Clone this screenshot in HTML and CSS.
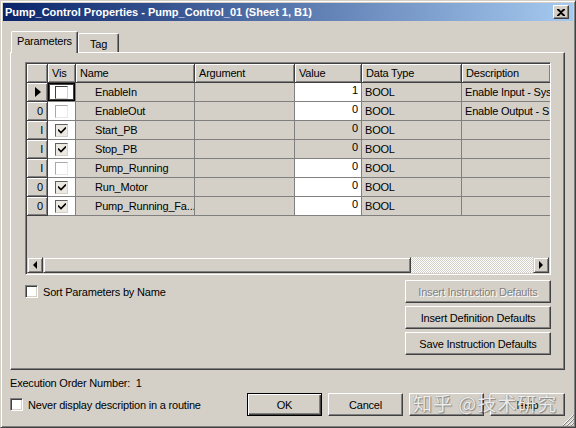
FILE: index.html
```html
<!DOCTYPE html>
<html lang="en">
<head>
  <meta charset="UTF-8">
  <title>Pump_Control Properties</title>
  <link rel="stylesheet" href="styles.css">
</head>
<body>
  <div class="window">
    <div class="titlebar">
      <span class="title">Pump_Control Properties - Pump_Control_01 (Sheet 1, B1)</span>
      <button class="close">
        <svg width="8" height="7" viewBox="0 0 8 7"><path d="M0 0h2l2 2 2-2h2v1L5 3.5 8 6v1H6L4 5 2 7H0V6l3-2.5L0 1z" fill="#000"/></svg>
      </button>
    </div>

    <div class="content">
      <div class="tabs">
        <div class="tab active">Parameters</div>
        <div class="tab tag">Tag</div>
      </div>

      <div class="panel">
        <div class="grid">
          <div class="grid-row head">
            <div class="cell c-hdr raised"></div>
            <div class="cell c-vis raised">Vis</div>
            <div class="cell c-name raised">Name</div>
            <div class="cell c-arg raised">Argument</div>
            <div class="cell c-val raised">Value</div>
            <div class="cell c-type raised">Data Type</div>
            <div class="cell c-desc raised">Description</div>
          </div>

          <div class="grid-row">
            <div class="cell c-hdr raised"><span class="row-arrow"></span></div>
            <div class="cell c-vis white focus"><span class="vbox"></span></div>
            <div class="cell c-name">EnableIn</div>
            <div class="cell c-arg"></div>
            <div class="cell c-val white">1</div>
            <div class="cell c-type">BOOL</div>
            <div class="cell c-desc">Enable Input - Sys</div>
          </div>
          <div class="grid-row">
            <div class="cell c-hdr raised">0</div>
            <div class="cell c-vis white"><span class="vbox dim"></span></div>
            <div class="cell c-name">EnableOut</div>
            <div class="cell c-arg"></div>
            <div class="cell c-val white">0</div>
            <div class="cell c-type">BOOL</div>
            <div class="cell c-desc">Enable Output - S</div>
          </div>
          <div class="grid-row">
            <div class="cell c-hdr raised">I</div>
            <div class="cell c-vis white"><span class="vbox checked"><svg width="8" height="7" viewBox="0 0 8 7"><path d="M0 2.5l3 3 5-5" stroke="#000" stroke-width="1.6" fill="none"/></svg></span></div>
            <div class="cell c-name">Start_PB</div>
            <div class="cell c-arg"></div>
            <div class="cell c-val">0</div>
            <div class="cell c-type">BOOL</div>
            <div class="cell c-desc"></div>
          </div>
          <div class="grid-row">
            <div class="cell c-hdr raised">I</div>
            <div class="cell c-vis white"><span class="vbox checked"><svg width="8" height="7" viewBox="0 0 8 7"><path d="M0 2.5l3 3 5-5" stroke="#000" stroke-width="1.6" fill="none"/></svg></span></div>
            <div class="cell c-name">Stop_PB</div>
            <div class="cell c-arg"></div>
            <div class="cell c-val">0</div>
            <div class="cell c-type">BOOL</div>
            <div class="cell c-desc"></div>
          </div>
          <div class="grid-row">
            <div class="cell c-hdr raised">I</div>
            <div class="cell c-vis white"><span class="vbox dim"></span></div>
            <div class="cell c-name">Pump_Running</div>
            <div class="cell c-arg"></div>
            <div class="cell c-val white">0</div>
            <div class="cell c-type">BOOL</div>
            <div class="cell c-desc"></div>
          </div>
          <div class="grid-row">
            <div class="cell c-hdr raised">0</div>
            <div class="cell c-vis white"><span class="vbox checked"><svg width="8" height="7" viewBox="0 0 8 7"><path d="M0 2.5l3 3 5-5" stroke="#000" stroke-width="1.6" fill="none"/></svg></span></div>
            <div class="cell c-name">Run_Motor</div>
            <div class="cell c-arg"></div>
            <div class="cell c-val white">0</div>
            <div class="cell c-type">BOOL</div>
            <div class="cell c-desc"></div>
          </div>
          <div class="grid-row">
            <div class="cell c-hdr raised">0</div>
            <div class="cell c-vis white"><span class="vbox checked"><svg width="8" height="7" viewBox="0 0 8 7"><path d="M0 2.5l3 3 5-5" stroke="#000" stroke-width="1.6" fill="none"/></svg></span></div>
            <div class="cell c-name">Pump_Running_Fa...</div>
            <div class="cell c-arg"></div>
            <div class="cell c-val white">0</div>
            <div class="cell c-type">BOOL</div>
            <div class="cell c-desc"></div>
          </div>

          <div class="grid-empty"></div>

          <div class="hscroll">
            <div class="sb-btn"><span class="arrow-left"></span></div>
            <div class="sb-thumb"></div>
            <div class="sb-track"></div>
            <div class="sb-btn"><span class="arrow-right"></span></div>
          </div>
        </div>

        <div class="lower">
          <div class="check-line sort">
            <span class="checkbox"></span>
            <span>Sort Parameters by Name</span>
          </div>
          <div class="side-buttons">
            <button class="btn disabled">Insert Instruction Defaults</button>
            <button class="btn">Insert Definition Defaults</button>
            <button class="btn">Save Instruction Defaults</button>
          </div>
        </div>
      </div>

      <div class="exec">Execution Order Number:&nbsp; 1</div>

      <div class="footer">
        <div class="check-line">
          <span class="checkbox"></span>
          <span>Never display description in a routine</span>
        </div>
        <div class="dialog-buttons">
          <button class="btn default">OK</button>
          <button class="btn">Cancel</button>
          <button class="btn disabled"></button>
          <button class="btn">Help</button>
        </div>
      </div>
    </div>

    <svg class="grip" width="12" height="12" viewBox="0 0 12 12">
      <path d="M11 1L1 11M11 5L5 11M11 9L9 11" stroke="#fff" stroke-width="1"/>
      <path d="M12 1L1 12M12 5L5 12M12 9L9 12" stroke="#808080" stroke-width="1"/>
    </svg>
    <div class="watermark">知乎 @技术研究</div>
  </div>
</body>
</html>
```

FILE: styles.css
```css
body {
  margin: 0;
  font-family: "Liberation Sans", Arial, sans-serif;
  font-size: 11px;
  letter-spacing: -0.2px;
  color: #000;
  background-color: #d4d0c8;
}

.window {
  position: relative;
  box-sizing: border-box;
  width: 576px;
  height: 428px;
  padding: 2px;
  background-color: #d4d0c8;
  border: 1px solid;
  border-color: #d4d0c8 #404040 #404040 #d4d0c8;
  box-shadow: inset 1px 1px #fff, inset -1px -1px #808080;
}

/* title bar */
.titlebar {
  display: flex;
  align-items: center;
  height: 18px;
  padding: 0 4px 0 2px;
  background: linear-gradient(to right, #0a246a, #a6caf0);
}

.title {
  flex-grow: 1;
  color: #fff;
  font-weight: bold;
  font-size: 11px;
  letter-spacing: 0;
  white-space: nowrap;
}

.close {
  display: flex;
  align-items: center;
  justify-content: center;
  width: 16px;
  height: 14px;
  padding: 0;
  background-color: #d4d0c8;
  border: 1px solid;
  border-color: #fff #404040 #404040 #fff;
  box-shadow: inset -1px -1px #808080;
}

.content {
  padding: 10px 8px 0 7px;
}

/* tabs */
.tabs {
  display: flex;
  align-items: flex-end;
  height: 21px;
  padding-left: 1px;
  position: relative;
  z-index: 2;
}

.tab {
  box-sizing: border-box;
  height: 19px;
  padding-top: 3px;
  text-align: center;
  background-color: #d4d0c8;
  border: 1px solid;
  border-color: #fff #404040 transparent #fff;
  border-bottom: none;
  border-radius: 2px 2px 0 0;
  box-shadow: inset -1px 0 #808080;
}

.tab.active {
  width: 67px;
  height: 22px;
  margin-bottom: -1px;
  padding-top: 3px;
}

.tab.tag {
  width: 41px;
  padding-top: 4px;
}

.panel {
  box-sizing: border-box;
  height: 318px;
  padding: 9px 12px 0 14px;
  border: 1px solid;
  border-color: #fff #404040 #404040 #fff;
  box-shadow: inset -1px -1px #808080;
}

/* parameter grid */
.grid {
  box-sizing: border-box;
  display: flex;
  flex-direction: column;
  width: 526px;
  height: 213px;
  padding: 1px;
  border: 1px solid;
  border-color: #808080 #fff #fff #808080;
  box-shadow: inset 1px 1px #404040, inset -1px -1px #d4d0c8;
  overflow: hidden;
}

.grid-row {
  display: flex;
  height: 19px;
  flex-shrink: 0;
}

.cell {
  box-sizing: border-box;
  height: 19px;
  line-height: 18px;
  padding: 0 3px;
  border-right: 1px solid #808080;
  border-bottom: 1px solid #808080;
  white-space: nowrap;
  overflow: hidden;
  flex-shrink: 0;
}

.raised {
  border-right-color: #404040;
  border-bottom-color: #404040;
  box-shadow: inset 1px 1px #fff, inset -1px -1px #808080;
}

.head .cell {
  padding-left: 4px;
}

.white {
  background-color: #fff;
}

.c-hdr {
  width: 21px;
  text-align: right;
  padding-right: 4px;
}
.c-vis {
  width: 28px;
  display: flex;
  align-items: center;
  justify-content: center;
}
.c-name {
  width: 119px;
  padding-left: 19px;
}
.c-arg {
  width: 100px;
}
.c-val {
  width: 67px;
  text-align: right;
  line-height: 15px;
}
.c-type {
  width: 100px;
}
.c-desc {
  width: 88px;
  border-right: none;
}

.head .c-vis {
  display: block;
}
.head .c-val {
  text-align: left;
  line-height: 18px;
}

.focus {
  box-shadow: inset 0 0 0 1px #000, inset 0 0 0 2px #404040;
}

.row-arrow {
  display: inline-block;
  width: 0;
  height: 0;
  border-top: 5px solid transparent;
  border-bottom: 5px solid transparent;
  border-left: 6px solid #000;
  vertical-align: -1px;
  margin-right: 2px;
}

.vbox {
  box-sizing: border-box;
  display: flex;
  align-items: center;
  justify-content: center;
  width: 13px;
  height: 13px;
  background-color: #fff;
  border: 1px solid;
  border-color: #404040 #d4d0c8 #d4d0c8 #404040;
}

.vbox.dim {
  border-color: #a8a8a8 #e8e8e8 #e8e8e8 #a8a8a8;
}

.vbox.checked {
  background-color: #ece9e2;
  border-color: #606060 #d4d0c8 #d4d0c8 #606060;
}

.grid-empty {
  flex-grow: 1;
}

/* horizontal scrollbar */
.hscroll {
  display: flex;
  height: 16px;
  flex-shrink: 0;
}

.sb-btn, .sb-thumb {
  box-sizing: border-box;
  height: 16px;
  background-color: #d4d0c8;
  border: 1px solid;
  border-color: #d4d0c8 #404040 #404040 #d4d0c8;
  box-shadow: inset 1px 1px #fff, inset -1px -1px #808080;
}

.sb-btn {
  width: 16px;
  display: flex;
  align-items: center;
  justify-content: center;
}

.sb-thumb {
  width: 368px;
}

.sb-track {
  width: 122px;
  background: repeating-conic-gradient(#fff 0 25%, #d4d0c8 0 50%) 0 0 / 2px 2px;
}

.arrow-left, .arrow-right {
  width: 0;
  height: 0;
  border-top: 4px solid transparent;
  border-bottom: 4px solid transparent;
}
.arrow-left {
  border-right: 4px solid #000;
}
.arrow-right {
  border-left: 4px solid #000;
}

/* below the grid */
.lower {
  display: flex;
  justify-content: space-between;
  width: 526px;
  margin-top: 5px;
}

.check-line {
  display: flex;
  align-items: center;
  gap: 5px;
}

.check-line.sort {
  align-self: flex-start;
  margin-top: 5px;
}

.checkbox {
  box-sizing: border-box;
  width: 13px;
  height: 13px;
  background-color: #fff;
  border: 1px solid;
  border-color: #808080 #fff #fff #808080;
  box-shadow: inset 1px 1px #404040, inset -1px -1px #d4d0c8;
}

.side-buttons {
  display: flex;
  flex-direction: column;
  gap: 3px;
  width: 146px;
}

.btn {
  box-sizing: border-box;
  height: 23px;
  padding: 0;
  font-family: "Liberation Sans", Arial, sans-serif;
  font-size: 11px;
  letter-spacing: -0.2px;
  color: #000;
  background-color: #d4d0c8;
  border: 1px solid;
  border-color: #fff #404040 #404040 #fff;
  box-shadow: inset -1px -1px #808080;
}

.btn.disabled {
  color: #808080;
  text-shadow: 1px 1px #fff;
}

.btn.default {
  border-color: #000;
  box-shadow: inset 1px 1px #fff, inset -1px -1px #404040, inset -2px -2px #808080;
}

.exec {
  margin-top: 7px;
  line-height: 13px;
}

.footer {
  display: flex;
  align-items: center;
  margin-top: 3px;
}

.dialog-buttons {
  display: flex;
  gap: 6px;
  margin-left: auto;
}

.dialog-buttons .btn {
  width: 75px;
}

.grip {
  position: absolute;
  right: 1px;
  bottom: 1px;
}

.watermark {
  position: absolute;
  left: 412px;
  top: 390px;
  font-family: "Noto Sans CJK SC", sans-serif;
  font-size: 19px;
  line-height: 24px;
  letter-spacing: 1px;
  color: rgba(255, 255, 255, 0.85);
  text-shadow: 0 0 1px #808080, 1px 1px 1px rgba(0, 0, 0, 0.35);
  white-space: nowrap;
}
```
